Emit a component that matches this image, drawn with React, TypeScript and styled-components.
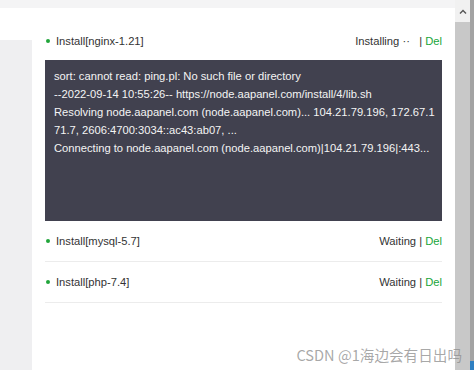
import React from "react";
import styled, { createGlobalStyle } from "styled-components";

const Global = createGlobalStyle`
  html, body { margin: 0; padding: 0; }
  body {
    width: 474px;
    height: 370px;
    overflow: hidden;
    background: #ffffff;
    font-family: "Liberation Sans", Arial, sans-serif;
  }
`;

const Screen = styled.div`
  position: relative;
  display: grid;
  grid-template-columns: 455px 15px 4px;
  width: 474px;
  height: 370px;
  overflow: hidden;
`;

const Main = styled.div`
  display: flex;
  flex-direction: column;
  min-width: 0;
  height: 370px;
`;

const TopStrip = styled.div`
  height: 8px;
  background: #f4f4f5;
  flex: none;
`;

const Body = styled.div`
  display: flex;
  flex: 1;
`;

const Gutter = styled.div`
  width: 32px;
  margin-top: 32px;
  background: #efeff1;
  flex: none;
`;

const Content = styled.div`
  flex: 1;
  min-width: 0;
  padding: 13px 13px 0 13px;
`;

const Item = styled.div<{ $divider?: boolean }>`
  border-bottom: ${(p) => (p.$divider ? "1px solid #ececec" : "none")};
  padding-bottom: ${(p) => (p.$divider ? "1px" : "0")};
`;

const Head = styled.div`
  display: flex;
  align-items: center;
  justify-content: space-between;
  height: 39px;
  font-size: 11.2px;
  color: #333;
`;

const Title = styled.div`
  display: flex;
  align-items: center;
  gap: 6px;
`;

const Dot = styled.span`
  width: 4px;
  height: 4px;
  border-radius: 50%;
  background: #20a53a;
  margin-left: 1px;
`;

const Status = styled.div`
  display: flex;
  align-items: center;
  white-space: pre;
`;

const DelLink = styled.span`
  color: #20a53a;
`;

const Log = styled.div`
  height: 161px;
  box-sizing: border-box;
  background: #41414f;
  color: #f4f4f4;
  font-size: 11.2px;
  line-height: 18px;
  padding: 7px 6px 7px 9px;
  word-break: break-all;
`;

const Track = styled.div`
  display: flex;
  flex-direction: column;
  height: 370px;
  background: #f1f1f1;
`;

const Arrow = styled.div`
  height: 22px;
  flex: none;
  display: flex;
  align-items: center;
  justify-content: center;
`;

const Thumb = styled.div`
  flex: 1;
  background: #c8c8c8;
`;

const Edge = styled.div`
  display: flex;
  flex-direction: column;
  height: 370px;
  background: #a3a3a3;
`;

const EdgeFill = styled.div`
  flex: 1;
`;

const EdgeBlue = styled.div`
  height: 9px;
  background: #2f7fc1;
`;

const Watermark = styled.div`
  position: absolute;
  right: 12px;
  bottom: 5px;
  font-family: "Noto Sans CJK SC", "Liberation Sans", sans-serif;
  font-size: 14.6px;
  color: rgba(140, 140, 140, 0.75);
  white-space: nowrap;
`;

const lines = [
  "sort: cannot read: ping.pl: No such file or directory",
  "--2022-09-14 10:55:26-- https://node.aapanel.com/install/4/lib.sh",
  "Resolving node.aapanel.com (node.aapanel.com)... 104.21.79.196, 172.67.171.7, 2606:4700:3034::ac43:ab07, ...",
  "Connecting to node.aapanel.com (node.aapanel.com)|104.21.79.196|:443...",
];

export default function App() {
  return (
    <>
      <Global />
      <Screen>
        <Main>
          <TopStrip />
          <Body>
            <Gutter />
            <Content>
              <Item>
                <Head>
                  <Title>
                    <Dot />
                    Install[nginx-1.21]
                  </Title>
                  <Status>
                    {"Installing ··   | "}
                    <DelLink>Del</DelLink>
                  </Status>
                </Head>
                <Log>
                  {lines.map((l) => (
                    <div key={l}>{l}</div>
                  ))}
                </Log>
              </Item>
              <Item $divider>
                <Head>
                  <Title>
                    <Dot />
                    Install[mysql-5.7]
                  </Title>
                  <Status>
                    {"Waiting | "}
                    <DelLink>Del</DelLink>
                  </Status>
                </Head>
              </Item>
              <Item $divider>
                <Head>
                  <Title>
                    <Dot />
                    Install[php-7.4]
                  </Title>
                  <Status>
                    {"Waiting | "}
                    <DelLink>Del</DelLink>
                  </Status>
                </Head>
              </Item>
            </Content>
          </Body>
        </Main>
        <Track>
          <Arrow>
            <svg width="8" height="5" viewBox="0 0 8 5">
              <path d="M1 4.5 L4 1.5 L7 4.5" fill="none" stroke="#555" strokeWidth="1.4" />
            </svg>
          </Arrow>
          <Thumb />
        </Track>
        <Edge>
          <EdgeFill />
          <EdgeBlue />
        </Edge>
        <Watermark>CSDN @1海边会有日出吗</Watermark>
      </Screen>
    </>
  );
}
